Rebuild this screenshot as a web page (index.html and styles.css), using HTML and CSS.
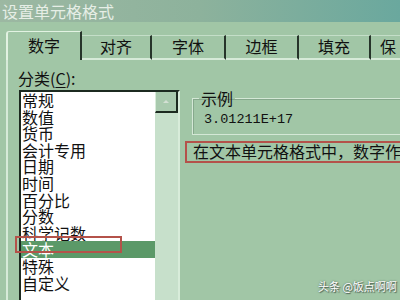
FILE: index.html
```html
<!DOCTYPE html>
<html lang="zh-CN">
<head>
<meta charset="utf-8">
<title>设置单元格格式</title>
<link rel="stylesheet" href="styles.css">
</head>
<body>
<div class="window">
  <div class="titlebar">设置单元格格式</div>
  <div class="tabs">
    <div class="tab active t1">数字</div>
    <div class="tab t2">对齐</div>
    <div class="tab t3">字体</div>
    <div class="tab t4">边框</div>
    <div class="tab t5">填充</div>
    <div class="tab t6">保</div>
  </div>
  <div class="panel">
    <div class="left">
      <div class="label">分类(<u>C</u>):</div>
      <div class="listbox">
        <ul class="items">
          <li>常规</li>
          <li>数值</li>
          <li>货币</li>
          <li>会计专用</li>
          <li>日期</li>
          <li>时间</li>
          <li>百分比</li>
          <li>分数</li>
          <li>科学记数</li>
          <li class="selected">文本<span class="annot"></span></li>
          <li>特殊</li>
          <li>自定义</li>
        </ul>
        <div class="scrollbar">
          <div class="btn"><span class="arrow"></span></div>
        </div>
      </div>
    </div>
    <div class="right">
      <fieldset class="sample">
        <legend>示例</legend>
        <div class="value">3.01211E+17</div>
      </fieldset>
      <div class="desc">在文本单元格格式中，数字作为文本处理。</div>
    </div>
  </div>
  <div class="watermark">头条 @饭点啊啊</div>
</div>
</body>
</html>
```
FILE: styles.css
```css
* { box-sizing: border-box; }
html, body { margin: 0; padding: 0; }
body {
  width: 400px;
  height: 300px;
  overflow: hidden;
  background: #a1c6a6;
  font-family: "Noto Sans CJK SC", "DejaVu Sans", sans-serif;
  color: #111;
}
.window {
  position: relative;
  width: 400px;
  height: 300px;
  overflow: hidden;
}
.titlebar {
  height: 22px;
  line-height: 22px;
  font-size: 16px;
  padding-left: 2px;
  color: #e6eee6;
  white-space: nowrap;
  background: linear-gradient(to right, #9cb8a2 0%, #8db29c 50%, #6aa89e 100%);
}
.tabs {
  display: flex;
  align-items: flex-end;
  margin-top: 9px;
  height: 29px;
  padding-left: 6px;
}
.tab {
  height: 25px;
  font-size: 16px;
  line-height: 21px;
  text-align: center;
  border-top: 1px solid #c4dec8;
  border-right: 2px solid #26342a;
  border-bottom: 2px solid #d6ead8;
  flex: none;
}
.tab.active {
  height: 29px;
  line-height: 27px;
  border-top: 1px solid #e2f2e2;
  border-left: 2px solid #e2f2e2;
  border-bottom: none;
  border-top-left-radius: 3px;
}
.t1 { width: 76px; }
.t2 { width: 70px; }
.t3 { width: 74px; }
.t4 { width: 73px; }
.t5 { width: 72px; }
.t6 { flex: 1; text-align: left; padding-left: 9px; border-right: none; }

.panel {
  display: flex;
  margin-left: 6px;
  border-left: 2px solid #d6ead8;
  padding-left: 11px;
  height: 240px;
}
.left { width: 161px; flex: none; }
.label {
  margin-top: 8px;
  margin-left: -1px;
  font-size: 16px;
  line-height: 20px;
}
.label u { text-underline-offset: 2px; }
.listbox {
  margin-top: 2px;
  display: flex;
  height: 220px;
  border-top: 2px solid #1c2a20;
  border-left: 2px solid #1c2a20;
  border-right: 2px solid #d8ecda;
}
.items {
  list-style: none;
  margin: 0;
  padding: 0;
  flex: 1;
  background: #fff;
}
.items li {
  position: relative;
  font-size: 16px;
  line-height: 16.6px;
  height: 16.6px;
  padding-left: 1px;
  white-space: nowrap;
}
.items li.selected {
  background: #5b9968;
  color: #fff;
}
.annot {
  position: absolute;
  left: -6px;
  top: -5px;
  width: 107px;
  height: 17px;
  border: 2px solid #b4524a;
}
.scrollbar {
  width: 23px;
  flex: none;
  background: #c7e0cb;
}
.btn {
  height: 21px;
  background: #a9caae;
  border-left: 1px solid #d8ecda;
  border-right: 2px solid #1c2a20;
  border-bottom: 2px solid #1c2a20;
  display: flex;
  align-items: center;
  justify-content: center;
}
.arrow {
  width: 0;
  height: 0;
  border-left: 3px solid transparent;
  border-right: 3px solid transparent;
  border-bottom: 3px solid #d4e0d4;
}

.right {
  margin-left: 5px;
  flex: none;
  width: 240px;
}
.sample {
  margin: 28px 0 0 7px;
  padding: 0 0 5px 6px;
  width: 230px;
  border: 1px solid #d4e8d6;
  box-shadow: inset 1px 1px 0 #86a88c;
}
.sample legend {
  padding: 0 2px;
  font-size: 16px;
  line-height: 20px;
}
.value {
  margin-top: 3px;
  padding-left: 5px;
  font-family: "Liberation Mono", "DejaVu Sans Mono", monospace;
  font-size: 13.5px;
  line-height: 18px;
}
.desc {
  margin-top: 6px;
  height: 22px;
  width: 240px;
  border: 2px solid #b4524a;
  padding: 0 0 2px 6px;
  font-size: 16px;
  line-height: 16px;
  white-space: nowrap;
  overflow: hidden;
}
.watermark {
  position: absolute;
  left: 318px;
  top: 279px;
  font-size: 11px;
  line-height: 14px;
  white-space: nowrap;
  color: #fff;
  text-shadow: 0 0 2px #556a5a, 1px 1px 1px #4a5a4e;
}
```
